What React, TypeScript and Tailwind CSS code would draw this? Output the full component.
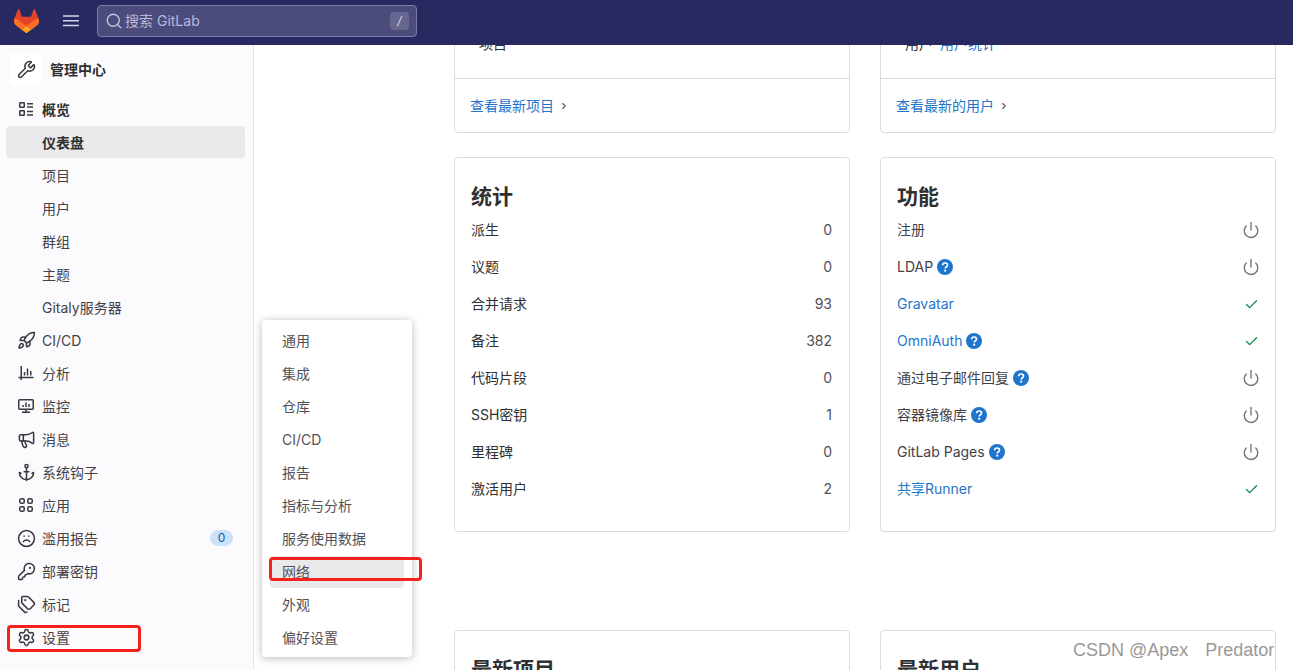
import { Anchor, Check, ChevronRight, Frown, KeyRound, Megaphone, Power, Rocket, Search, Settings, Tags, Wrench } from "lucide-react";
import type { ReactNode } from "react";

const fontStack = "font-['Inter','Noto_Sans_CJK_SC',sans-serif]";

function TanukiLogo() {
  return (
    <svg width="25" height="24" viewBox="0 0 25 24">
      <path fill="#E24329" d="m24.507 9.5-.034-.09L21.082.562a.896.896 0 0 0-1.694.091l-2.29 7.01H7.825L5.535.653a.898.898 0 0 0-1.694-.09L.451 9.411.416 9.5a6.297 6.297 0 0 0 2.09 7.278l.012.01.03.022 5.16 3.867 2.56 1.935 1.554 1.176a1.051 1.051 0 0 0 1.268 0l1.555-1.176 2.56-1.935 5.197-3.89.014-.01A6.297 6.297 0 0 0 24.507 9.5Z" />
      <path fill="#FC6D26" d="m24.507 9.5-.034-.09a11.44 11.44 0 0 0-4.56 2.051l-7.447 5.632 4.742 3.584 5.197-3.89.014-.01A6.297 6.297 0 0 0 24.507 9.5Z" />
      <path fill="#FCA326" d="m7.707 20.677 2.56 1.935 1.555 1.176a1.051 1.051 0 0 0 1.268 0l1.555-1.176 2.56-1.935-4.743-3.584-4.755 3.584Z" />
      <path fill="#FC6D26" d="M5.01 11.461a11.43 11.43 0 0 0-4.56-2.05L.416 9.5a6.297 6.297 0 0 0 2.09 7.278l.012.01.03.022 5.16 3.867 4.745-3.584-7.444-5.632Z" />
    </svg>
  );
}

function HamburgerIcon() {
  return (
    <svg width="16" height="12" viewBox="0 0 16 12" fill="none" stroke="#d4d4ea" strokeWidth="1.5">
      <path d="M0 1h16M0 5.75h16M0 10.5h16" />
    </svg>
  );
}

function OverviewIcon() {
  return (
    <svg width="16" height="16" viewBox="0 0 16 16" fill="none" stroke="currentColor" strokeWidth="1.5">
      <rect x="1.75" y="1.75" width="4.5" height="4.5" rx="0.5" />
      <rect x="1.75" y="9.75" width="4.5" height="4.5" rx="0.5" />
      <path d="M9 2.75h6M9 6h6M9 10.5h6M9 14h6" />
    </svg>
  );
}

function ChartIcon() {
  return (
    <svg width="16" height="16" viewBox="0 0 16 16" fill="none" stroke="currentColor" strokeWidth="1.5">
      <path d="M3.25 1v14M0.5 12.5h15M6.5 7v3.5M9.5 3.5v7M12.75 6v4.5" />
    </svg>
  );
}

function MonitorIcon() {
  return (
    <svg width="16" height="16" viewBox="0 0 16 16" fill="none" stroke="currentColor" strokeWidth="1.5">
      <rect x="0.75" y="1.75" width="14.5" height="9.5" rx="1" />
      <path d="M8 11.5v2.75M4 14.25h8M5 9V7M8 9V4.5M11 9V6" />
    </svg>
  );
}

function AppsIcon() {
  return (
    <svg width="16" height="16" viewBox="0 0 16 16" fill="none" stroke="currentColor" strokeWidth="1.5">
      <rect x="1.75" y="1.75" width="4.5" height="4.5" rx="1.5" />
      <rect x="9.75" y="1.75" width="4.5" height="4.5" rx="1.5" />
      <rect x="1.75" y="9.75" width="4.5" height="4.5" rx="1.5" />
      <rect x="9.75" y="9.75" width="4.5" height="4.5" rx="1.5" />
    </svg>
  );
}

function HelpBadge() {
  return (
    <svg width="16" height="16" viewBox="0 0 16 16" className="shrink-0">
      <circle cx="8" cy="8" r="8" fill="#1f75cb" />
      <path d="M5.6 6.2C5.7 4.8 6.7 4 8.1 4c1.4 0 2.4.8 2.4 2 0 1-.6 1.5-1.3 2-.6.4-.9.7-.9 1.4" fill="none" stroke="#fff" strokeWidth="1.7" />
      <circle cx="8.2" cy="11.7" r="1.1" fill="#fff" />
    </svg>
  );
}

const navItems: { label: string; icon: ReactNode; badge?: string }[] = [
  { label: "CI/CD", icon: <Rocket size={19} strokeWidth={1.9} className="shrink-0" /> },
  { label: "分析", icon: <ChartIcon /> },
  { label: "监控", icon: <MonitorIcon /> },
  { label: "消息", icon: <Megaphone size={19} strokeWidth={1.9} className="shrink-0" /> },
  { label: "系统钩子", icon: <Anchor size={19} strokeWidth={1.9} className="shrink-0" /> },
  { label: "应用", icon: <AppsIcon /> },
  { label: "滥用报告", icon: <Frown size={19} strokeWidth={1.9} className="shrink-0" />, badge: "0" },
  { label: "部署密钥", icon: <KeyRound size={19} strokeWidth={1.9} className="shrink-0" /> },
  { label: "标记", icon: <Tags size={19} strokeWidth={1.9} className="shrink-0" /> },
  { label: "设置", icon: <Settings size={19} strokeWidth={1.9} className="shrink-0" /> },
];

const overviewItems = ["项目", "用户", "群组", "主题", "Gitaly服务器"];

const flyoutItems = ["通用", "集成", "仓库", "CI/CD", "报告", "指标与分析", "服务使用数据", "网络", "外观", "偏好设置"];

const stats = [
  ["派生", "0"],
  ["议题", "0"],
  ["合并请求", "93"],
  ["备注", "382"],
  ["代码片段", "0"],
  ["SSH密钥", "1"],
  ["里程碑", "0"],
  ["激活用户", "2"],
];

const features = [
  { label: "注册", on: false, help: false },
  { label: "LDAP", on: false, help: true },
  { label: "Gravatar", on: true, help: false },
  { label: "OmniAuth", on: true, help: true },
  { label: "通过电子邮件回复", on: false, help: true },
  { label: "容器镜像库", on: false, help: true },
  { label: "GitLab Pages", on: false, help: true },
  { label: "共享Runner", on: true, help: false },
];

function Header() {
  return (
    <header className="relative z-10 flex h-[45px] shrink-0 items-center bg-[#292961] pb-[3px]">
      <div className="ml-[14px] flex h-6 w-[25px] items-center">
        <TanukiLogo />
      </div>
      <span className="ml-6">
        <HamburgerIcon />
      </span>
      <div className="ml-[18px] flex h-8 w-[320px] items-center rounded border border-[#7c7ca6] bg-[#4c4c7c] pl-[7px] pr-[7px]">
        <Search size={18} strokeWidth={1.8} className="text-[#c4c4de]" />
        <span className="ml-[2px] text-sm text-[#b8b8dc]">搜索 GitLab</span>
        <span className="ml-auto flex h-[18px] w-[19px] items-center justify-center rounded-sm bg-[#66668f] text-xs italic text-[#d8d8ee]">/</span>
      </div>
    </header>
  );
}

function Sidebar() {
  return (
    <aside className="w-[254px] shrink-0 border-r border-[#e6e6e8] bg-[#fbfafd] pt-2 text-sm text-[#444248]">
      <div className="ml-[10px] flex h-8 items-center">
        <div className="flex h-8 w-8 items-center justify-center rounded bg-white text-[#3a383f]">
          <Wrench size={19} strokeWidth={1.9} />
        </div>
        <span className="ml-2 pt-[2px] font-semibold text-[#303030]">管理中心</span>
      </div>
      <nav className="ml-1.5 mr-2 mt-2 flex flex-col gap-px">
        <div className="flex h-8 items-center pl-3">
          <span className="mr-2 text-[#3a383f]"><OverviewIcon /></span>
          <span className="pt-[2px] font-semibold text-[#303030]">概览</span>
        </div>
        <div className="flex h-8 items-center rounded bg-[#e9e9eb] pl-9 font-semibold text-[#303030]">
          <span className="pt-[2px]">仪表盘</span>
        </div>
        {overviewItems.map((item) => (
          <div key={item} className="flex h-8 items-center pl-9">
            <span className="pt-[2px]">{item}</span>
          </div>
        ))}
        {navItems.map((item) => (
          <div key={item.label} className="flex h-8 items-center pl-3 pr-3">
            <span className="mr-2 flex w-4 justify-center text-[#3a383f]">{item.icon}</span>
            <span className="pt-[2px]">{item.label}</span>
            {item.badge && (
              <span className="ml-auto flex h-4 w-[23px] items-center justify-center rounded-full bg-[#cbe2f9] text-xs text-[#0b5cad]">{item.badge}</span>
            )}
          </div>
        ))}
      </nav>
    </aside>
  );
}

function LinkCard({ children, link }: { children: ReactNode; link: string }) {
  return (
    <div className="rounded border border-[#dcdcde] bg-white text-sm">
      <div className="h-[52px] pl-[15px] pt-2">{children}</div>
      <div className="flex h-[54px] items-center border-t border-[#dcdcde] pl-[15px]">
        <span className="text-[#1f75cb]">{link}</span>
        <ChevronRight size={10} strokeWidth={2.6} className="ml-[5px] text-[#535158]" />
      </div>
    </div>
  );
}

function StatsCard() {
  return (
    <div className="h-[375px] rounded border border-[#dcdcde] bg-white pl-4 pr-[17px] pt-[26px] text-sm text-[#303030]">
      <h3 className="mb-[2px] h-[25px] text-[21px] font-semibold leading-[25px]">统计</h3>
      {stats.map(([label, value]) => (
        <div key={label} className="flex h-[37px] items-center justify-between">
          <span>{label}</span>
          <span className="text-[#535158]">{value}</span>
        </div>
      ))}
    </div>
  );
}

function FeaturesCard() {
  return (
    <div className="h-[375px] rounded border border-[#dcdcde] bg-white pl-4 pr-[17px] pt-[26px] text-sm text-[#303030]">
      <h3 className="mb-[2px] h-[25px] text-[21px] font-semibold leading-[25px]">功能</h3>
      {features.map((f) => (
        <div key={f.label} className="flex h-[37px] items-center">
          <span className={f.on ? "text-[#1f75cb]" : "text-[#444248]"}>{f.label}</span>
          {f.help && <span className="ml-1"><HelpBadge /></span>}
          <span className="ml-auto flex w-[14px] justify-center">
            {f.on ? (
              <Check size={15} strokeWidth={2} className="mt-[2px] shrink-0 text-[#108548]" />
            ) : (
              <Power size={18} strokeWidth={1.8} className="shrink-0 text-[#737278]" />
            )}
          </span>
        </div>
      ))}
    </div>
  );
}

function Flyout() {
  return (
    <div className="absolute left-[262px] top-[320px] z-20 flex h-[337px] w-[150px] flex-col gap-px rounded bg-white px-2 pt-[5px] text-sm text-[#535158] shadow-[0_1px_8px_rgba(0,0,0,0.28)]">
      {flyoutItems.map((item) => (
        <div key={item} className={`flex h-8 items-center rounded pl-3 ${item === "网络" ? "bg-[#e9e9eb]" : ""}`}>{item}</div>
      ))}
    </div>
  );
}

export default function App() {
  return (
    <div className={`relative flex h-[670px] w-[1293px] flex-col overflow-hidden bg-white ${fontStack}`}>
      <Header />
      <div className="flex min-h-0 flex-1">
        <Sidebar />
        <main className="min-w-0 flex-1 pl-[200px] pr-[17px]">
          <div className="-mt-[20px] grid grid-cols-2 gap-x-[30px]">
            <LinkCard link="查看最新项目">
              <span className="pl-[9px] text-[#303030]">项目</span>
            </LinkCard>
            <LinkCard link="查看最新的用户">
              <span className="pl-[9px] text-[#303030]">用户</span>
              <span className="pl-[7px] text-[#1f75cb]">用户统计</span>
            </LinkCard>
          </div>
          <div className="mt-6 grid grid-cols-2 gap-x-[30px]">
            <StatsCard />
            <FeaturesCard />
          </div>
          <div className="mt-[98px] grid grid-cols-2 gap-x-[30px]">
            <div className="h-[120px] rounded border border-[#dcdcde] bg-white pl-4 pt-[26px]">
              <h3 className="text-[21px] font-semibold leading-[25px] text-[#303030]">最新项目</h3>
            </div>
            <div className="h-[120px] rounded border border-[#dcdcde] bg-white pl-4 pt-[26px]">
              <h3 className="text-[21px] font-semibold leading-[25px] text-[#303030]">最新用户</h3>
            </div>
          </div>
        </main>
      </div>
      <Flyout />
      {/* annotation boxes and watermark lie over the screenshot */}
      <div className="absolute left-[7px] top-[625px] z-30 h-[27px] w-[134px] rounded-sm border-[3px] border-[#f5211c]" />
      <div className="absolute left-[269px] top-[557px] z-30 h-6 w-[153px] rounded-sm border-[3px] border-[#f5211c]" />
      <div className="absolute left-[1073px] top-[637px] z-30 flex gap-[17px] text-lg leading-[26px] text-[#999999] font-['Liberation_Sans',sans-serif]">
        <span>CSDN @Apex</span>
        <span>Predator</span>
      </div>
    </div>
  );
}
